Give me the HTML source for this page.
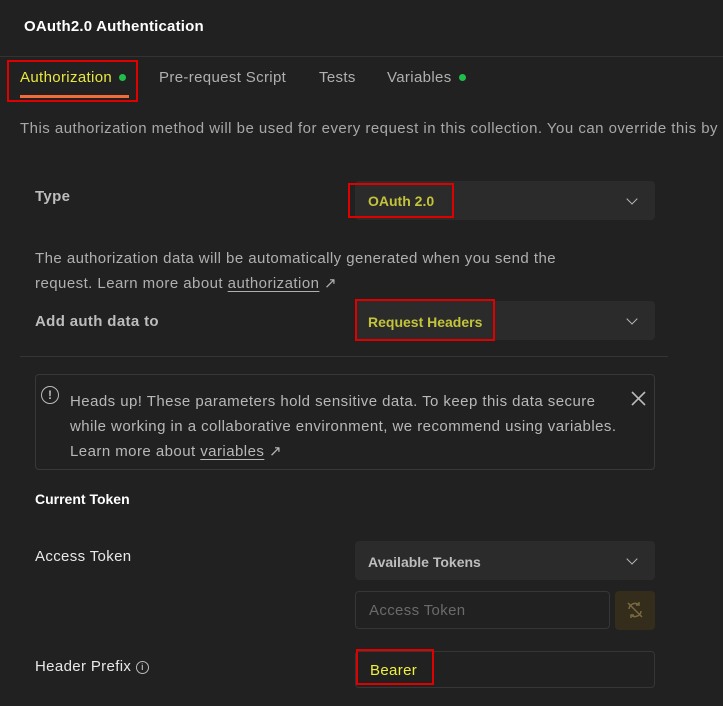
<!DOCTYPE html>
<html><head><style>
body{margin:0;width:723px;height:706px;background:#212121;font-family:"Liberation Sans",sans-serif;color:#c8c8c8;position:relative;overflow:hidden}
.a{position:absolute;white-space:nowrap}
.t{letter-spacing:0.35px}
.dd{position:absolute;background:#2b2b2b;border-radius:4px}
.red{position:absolute;border:2px solid #e00000;box-sizing:border-box}
.chev{position:absolute;width:7px;height:7px;border-right:1.5px solid #bbb;border-bottom:1.5px solid #bbb;transform:rotate(45deg)}
.dot{display:inline-block;width:7px;height:7px;border-radius:50%;background:#1fbf4a;margin-left:7px;vertical-align:1px}
u{text-decoration:underline;text-underline-offset:3px}
</style></head><body>
<div class="a" style="left:24px;top:18px;font-size:15px;font-weight:bold;color:#fff;letter-spacing:0.2px">OAuth2.0 Authentication</div>
<div class="a" style="left:0;top:56px;width:723px;height:1px;background:#333"></div>
<div class="a t" style="left:20px;top:69px;font-size:15px;color:#e8e840">Authorization<span class="dot"></span></div>
<div class="a" style="left:20px;top:95px;width:109px;height:3px;background:#f26b3a"></div>
<div class="red" style="left:7px;top:60px;width:131px;height:42px"></div>
<div class="a t" style="left:159px;top:69px;font-size:15px;color:#b0b0b0">Pre-request Script</div>
<div class="a t" style="left:319px;top:69px;font-size:15px;color:#b0b0b0">Tests</div>
<div class="a t" style="left:387px;top:69px;font-size:15px;color:#b0b0b0">Variables<span class="dot"></span></div>
<div class="a" style="left:20px;top:120px;font-size:15px;color:#a8a8a8;letter-spacing:0.48px">This authorization method will be used for every request in this collection. You can override this by</div>

<div class="a t" style="left:35px;top:188px;font-size:15px;font-weight:bold;color:#bdbdbd">Type</div>
<div class="dd" style="left:355px;top:181px;width:300px;height:39px"></div>
<div class="a" style="left:368px;top:193px;font-size:14px;font-weight:bold;color:#c4c43a">OAuth 2.0</div>
<div class="chev" style="left:628px;top:195px"></div>
<div class="red" style="left:348px;top:183px;width:106px;height:35px"></div>

<div class="a" style="left:35px;top:246px;font-size:15px;color:#b0b0b0;line-height:25px;letter-spacing:0.45px">The authorization data will be automatically generated when you send the<br>request. Learn more about <u>authorization</u> ↗</div>

<div class="a t" style="left:35px;top:313px;font-size:15px;font-weight:bold;color:#bdbdbd">Add auth data to</div>
<div class="dd" style="left:355px;top:301px;width:300px;height:39px"></div>
<div class="a" style="left:368px;top:314px;font-size:14px;font-weight:bold;color:#c4c43a">Request Headers</div>
<div class="chev" style="left:628px;top:315px"></div>
<div class="red" style="left:355px;top:299px;width:140px;height:42px"></div>

<div class="a" style="left:20px;top:356px;width:648px;height:1px;background:#353535"></div>

<div class="a" style="left:35px;top:374px;width:618px;height:94px;border:1px solid #383838;border-radius:4px"></div>
<div class="a" style="left:41px;top:386px;width:16px;height:16px;border:1.5px solid #bbb;border-radius:50%;font-size:12px;font-weight:bold;text-align:center;line-height:16px;color:#bbb">!</div>
<div class="a" style="left:70px;top:389px;font-size:15px;color:#b8b8b8;line-height:25px;letter-spacing:0.45px">Heads up! These parameters hold sensitive data. To keep this data secure<br>while working in a collaborative environment, we recommend using variables.<br>Learn more about <u>variables</u> ↗</div>
<svg class="a" style="left:631px;top:391px" width="15" height="15" viewBox="0 0 15 15"><path d="M1 1L14 14M14 1L1 14" stroke="#bbb" stroke-width="1.6"/></svg>

<div class="a" style="left:35px;top:491px;font-size:14px;font-weight:bold;color:#fff">Current Token</div>
<div class="a t" style="left:35px;top:548px;font-size:15px;color:#e8e8e8">Access Token</div>
<div class="dd" style="left:355px;top:541px;width:300px;height:39px"></div>
<div class="a" style="left:368px;top:554px;font-size:14px;font-weight:bold;color:#bdbdbd">Available Tokens</div>
<div class="chev" style="left:628px;top:555px"></div>
<div class="a" style="left:355px;top:591px;width:253px;height:36px;border:1px solid #363636;border-radius:4px"></div>
<div class="a t" style="left:369px;top:602px;font-size:15px;color:#6a6a6a">Access Token</div>
<div class="a" style="left:615px;top:591px;width:40px;height:39px;background:#352d1c;border-radius:4px"></div>
<svg class="a" style="left:625px;top:600px" width="20" height="20" viewBox="0 0 20 20" fill="none" stroke="#7a6a40" stroke-width="1.5"><path d="M4 9a6 6 0 0 1 10-4M16 11a6 6 0 0 1-10 4"/><path d="M14 2v3h-3M6 18v-3h3"/><path d="M3 3l14 14"/></svg>

<div class="a t" style="left:35px;top:658px;font-size:15px;color:#e8e8e8">Header Prefix <span style="display:inline-block;width:11px;height:11px;border:1px solid #bbb;border-radius:50%;font-size:9px;text-align:center;line-height:11px;vertical-align:1px;letter-spacing:0">i</span></div>
<div class="a" style="left:355px;top:651px;width:298px;height:35px;border:1px solid #363636;border-radius:4px"></div>
<div class="a t" style="left:370px;top:662px;font-size:15px;color:#f0f040">Bearer</div>
<div class="red" style="left:356px;top:649px;width:78px;height:36px"></div>
</body></html>
